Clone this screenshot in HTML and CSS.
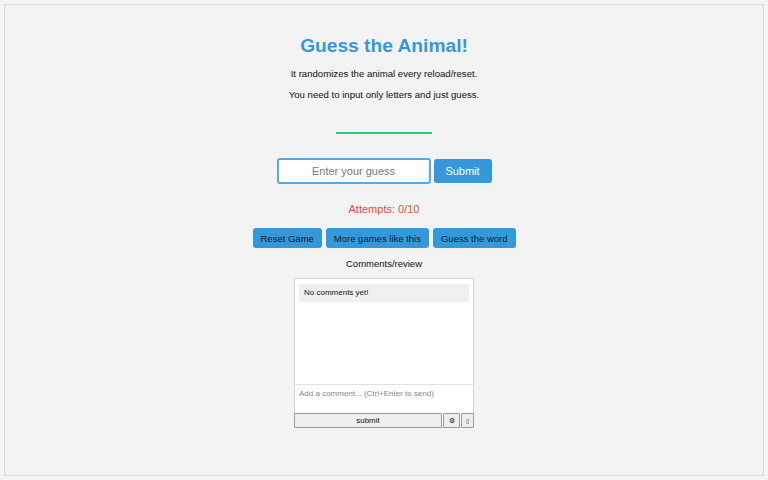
FILE: index.html
```html
<!DOCTYPE html>
<html>
<head>
<meta charset="utf-8">
<link rel="stylesheet" href="styles.css">
</head>
<body>
<div class="frame">
  <h1 class="title">Guess the Animal!</h1>
  <p class="info">It randomizes the animal every reload/reset.</p>
  <p class="info">You need to input only letters and just guess.</p>
  <div class="word"></div>
  <div class="guess-row">
    <input class="guess" type="text" placeholder="Enter your guess">
    <button class="btn submit">Submit</button>
  </div>
  <div class="attempts">Attempts: 0/10</div>
  <div class="actions">
    <button class="btn small">Reset Game</button>
    <button class="btn small">More games like this</button>
    <button class="btn small">Guess the word</button>
  </div>
  <div class="comments-label">Comments/review</div>
  <div class="comments">
    <div class="list">
      <div class="empty">No comments yet!</div>
    </div>
    <textarea class="comment-input" placeholder="Add a comment... (Ctrl+Enter to send)"></textarea>
    <div class="comment-bar">
      <button class="cbtn send">submit</button>
      <button class="cbtn icon">⚙</button>
      <button class="cbtn icon2">▯</button>
    </div>
  </div>
</div>
</body>
</html>
```
FILE: styles.css
```css
html, body {
  margin: 0;
  padding: 0;
  background: #f4f4f4;
  font-family: "Liberation Sans", Arial, sans-serif;
}
body {
  padding: 4px;
}
.frame {
  box-sizing: border-box;
  height: 472px;
  border: 1px solid #dcdcdc;
  background: #f3f3f3;
  display: flex;
  flex-direction: column;
  align-items: center;
  padding-top: 29px;
}
.title {
  margin: 0;
  color: #3498db;
  font-size: 19.2px;
  font-weight: bold;
  line-height: 24px;
}
.info {
  margin: 10px 0 0;
  font-size: 9.6px;
  line-height: 12px;
  color: #111;
}
.info + .info {
  margin-top: 9px;
}
.word {
  margin-top: 31px;
  width: 96px;
  height: 2px;
  background: #2ecc71;
}
.guess-row {
  margin-top: 24px;
  display: flex;
  gap: 3px;
  align-items: center;
}
.guess {
  box-sizing: border-box;
  width: 154px;
  height: 26px;
  border: 2px solid #5ea6de;
  border-radius: 3px;
  background: #fff;
  text-align: center;
  font-family: "Liberation Sans", Arial, sans-serif;
  font-size: 11px;
  padding: 0;
  outline: none;
}
.guess::placeholder {
  color: #777;
}
.btn {
  border: none;
  background: #3498db;
  border-radius: 3px;
  font-family: "Liberation Sans", Arial, sans-serif;
  cursor: pointer;
}
.submit {
  width: 58px;
  height: 24px;
  color: #fff;
  font-size: 11px;
  padding: 0;
}
.attempts {
  margin-top: 19px;
  color: #e74c3c;
  font-size: 11px;
  line-height: 13px;
}
.actions {
  margin-top: 12px;
  display: flex;
  gap: 4px;
}
.small {
  height: 20px;
  padding: 0 8px;
  color: #1a1a1a;
  font-size: 9.5px;
}
.comments-label {
  margin-top: 10px;
  font-size: 9.5px;
  line-height: 12px;
  color: #111;
}
.comments {
  margin-top: 8px;
  width: 180px;
  height: 150px;
  box-sizing: border-box;
  border: 1px solid #d4d4d4;
  background: #fff;
  display: flex;
  flex-direction: column;
}
.list {
  flex: 1;
  padding: 5px 4px;
}
.empty {
  background: #f0f0f0;
  height: 18px;
  line-height: 18px;
  padding-left: 5px;
  font-size: 8px;
  color: #111;
}
.comment-input {
  box-sizing: border-box;
  height: 29px;
  border: none;
  border-top: 1px solid #e2e2e2;
  resize: none;
  padding: 4px 4px;
  font-family: "Liberation Sans", Arial, sans-serif;
  font-size: 8px;
  outline: none;
}
.comment-input::placeholder {
  color: #888;
}
.comment-bar {
  display: flex;
  height: 15px;
  margin: 0 -1px -1px -1px;
}
.cbtn {
  box-sizing: border-box;
  height: 15px;
  border: 1px solid #999;
  background: #eee;
  font-family: "Liberation Sans", Arial, sans-serif;
  font-size: 8px;
  padding: 0;
  color: #111;
  border-radius: 1px;
}
.send {
  flex: 1;
}
.icon {
  width: 17px;
  margin-left: 1px;
  font-size: 7px;
}
.icon2 {
  width: 13px;
  margin-left: 1px;
  font-size: 6px;
}
```
